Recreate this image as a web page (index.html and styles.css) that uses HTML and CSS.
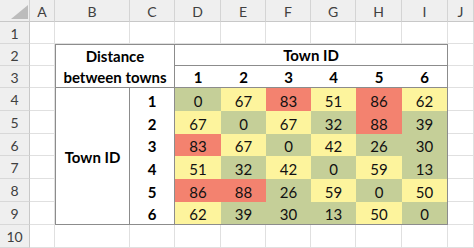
FILE: index.html
```html
<!DOCTYPE html>
<html>
<head>
<meta charset="utf-8">
<link rel="stylesheet" href="styles.css">
</head>
<body>
<div class="sheet">
  <div class="corner"></div>
  <div class="ch">A</div><div class="ch">B</div><div class="ch">C</div><div class="ch">D</div><div class="ch">E</div><div class="ch">F</div><div class="ch">G</div><div class="ch">H</div><div class="ch">I</div><div class="ch">J</div>

  <div class="rh">1</div><div class="c"></div><div class="c"></div><div class="c"></div><div class="c"></div><div class="c"></div><div class="c"></div><div class="c"></div><div class="c"></div><div class="c"></div><div class="c"></div>

  <div class="tbl">
    <div class="t-dist1">Distance</div>
    <div class="t-town">Town ID</div>
    <div class="t-dist2">between towns</div>
    <div class="t-col">1</div><div class="t-col">2</div><div class="t-col">3</div><div class="t-col">4</div><div class="t-col">5</div><div class="t-col">6</div>
    <div class="t-townl">Town ID</div>

    <div class="t-row">1</div>
    <div class="d g">0</div><div class="d y">67</div><div class="d r">83</div><div class="d y">51</div><div class="d r">86</div><div class="d y">62</div>
    <div class="t-row">2</div>
    <div class="d y">67</div><div class="d g">0</div><div class="d y">67</div><div class="d g">32</div><div class="d r">88</div><div class="d g">39</div>
    <div class="t-row">3</div>
    <div class="d r">83</div><div class="d y">67</div><div class="d g">0</div><div class="d y">42</div><div class="d g">26</div><div class="d g">30</div>
    <div class="t-row">4</div>
    <div class="d y">51</div><div class="d g">32</div><div class="d y">42</div><div class="d g">0</div><div class="d y">59</div><div class="d g">13</div>
    <div class="t-row">5</div>
    <div class="d r">86</div><div class="d r">88</div><div class="d g">26</div><div class="d y">59</div><div class="d g">0</div><div class="d y">50</div>
    <div class="t-row">6</div>
    <div class="d y">62</div><div class="d g">39</div><div class="d g">30</div><div class="d g">13</div><div class="d y">50</div><div class="d g">0</div>
  </div>

  <div class="rh">2</div><div class="c"></div><div class="c"></div>
  <div class="rh">3</div><div class="c"></div><div class="c"></div>
  <div class="rh">4</div><div class="c"></div><div class="c"></div>
  <div class="rh">5</div><div class="c"></div><div class="c"></div>
  <div class="rh">6</div><div class="c"></div><div class="c"></div>
  <div class="rh">7</div><div class="c"></div><div class="c"></div>
  <div class="rh">8</div><div class="c"></div><div class="c"></div>
  <div class="rh">9</div><div class="c"></div><div class="c"></div>

  <div class="rh">10</div><div class="c"></div><div class="c"></div><div class="c"></div><div class="c"></div><div class="c"></div><div class="c"></div><div class="c"></div><div class="c"></div><div class="c"></div><div class="c"></div>
</div>
</body>
</html>
```

FILE: styles.css
```css
* { box-sizing: border-box; }

html, body {
  margin: 0;
  padding: 0;
  background: #ffffff;
}

.sheet {
  width: 474px;
  height: 248px;
  overflow: hidden;
  display: grid;
  grid-template-columns: 30px 25px 75px 45px 46px 45px 45px 45px 46px 46px 1fr;
  grid-template-rows: 22px 22px 22px 22px 23px 23px 22px 23px 23px 23px 23px;
  font-family: Lato, "Open Sans", sans-serif;
  color: #000;
}

.corner {
  position: relative;
  background: #efefef;
  border-right: 1px solid #d0d0d0;
  border-bottom: 1px solid #c8c8c8;
}

.corner::after {
  content: "";
  position: absolute;
  left: 11px;
  top: 5px;
  width: 17px;
  height: 14px;
  background: #bcbcbc;
  clip-path: polygon(100% 0, 100% 100%, 0 100%);
}

.ch {
  background: #efefef;
  border-right: 1px solid #d4d4d4;
  border-bottom: 1px solid #c8c8c8;
  display: flex;
  align-items: center;
  justify-content: center;
  font-size: 14px;
  color: #404040;
  padding-top: 1px;
}

.rh {
  background: #efefef;
  border-right: 1px solid #c8c8c8;
  border-bottom: 1px solid #d8d8d8;
  display: flex;
  align-items: center;
  justify-content: center;
  font-size: 14px;
  color: #404040;
  padding-top: 1px;
}

.c {
  border-right: 1px solid #e0e0e0;
  border-bottom: 1px solid #e0e0e0;
}

.tbl {
  grid-column: 3 / 11;
  grid-row: 3 / 11;
  border: 1px solid #8c8c8c;
  background: #fff;
  display: grid;
  grid-template-columns: 74px 45px 46px 45px 45px 45px 46px 45px;
  grid-template-rows: 21px 22px 23px 23px 22px 23px 23px 22px;
  font-size: 15px;
}

.tbl > div {
  display: flex;
  align-items: flex-end;
  justify-content: center;
  padding-bottom: 1px;
  line-height: 18px;
  white-space: nowrap;
}

.t-dist1 {
  grid-column: 1 / 3;
  grid-row: 1;
  font-weight: 700;
  border-right: 1px solid #8c8c8c;
}

.t-dist2 {
  grid-column: 1 / 3;
  grid-row: 2;
  font-weight: 700;
  border-right: 1px solid #8c8c8c;
  border-bottom: 1px solid #8c8c8c;
}

.t-town {
  grid-column: 3 / 9;
  grid-row: 1;
  font-weight: 700;
  border-bottom: 1px solid #8c8c8c;
}

.t-col {
  font-weight: 700;
  border-bottom: 1px solid #8c8c8c;
}

.tbl > .t-townl {
  grid-column: 1;
  grid-row: 3 / 9;
  font-weight: 700;
  align-items: center;
  padding-bottom: 0;
  padding-top: 2px;
  border-right: 1px solid #8c8c8c;
}

.t-row {
  font-weight: 700;
  border-right: 1px solid #8c8c8c;
}

.d { color: #111; }
.g { background: #c5cf98; }
.y { background: #fdf49d; }
.r { background: #f3826f; }
```
